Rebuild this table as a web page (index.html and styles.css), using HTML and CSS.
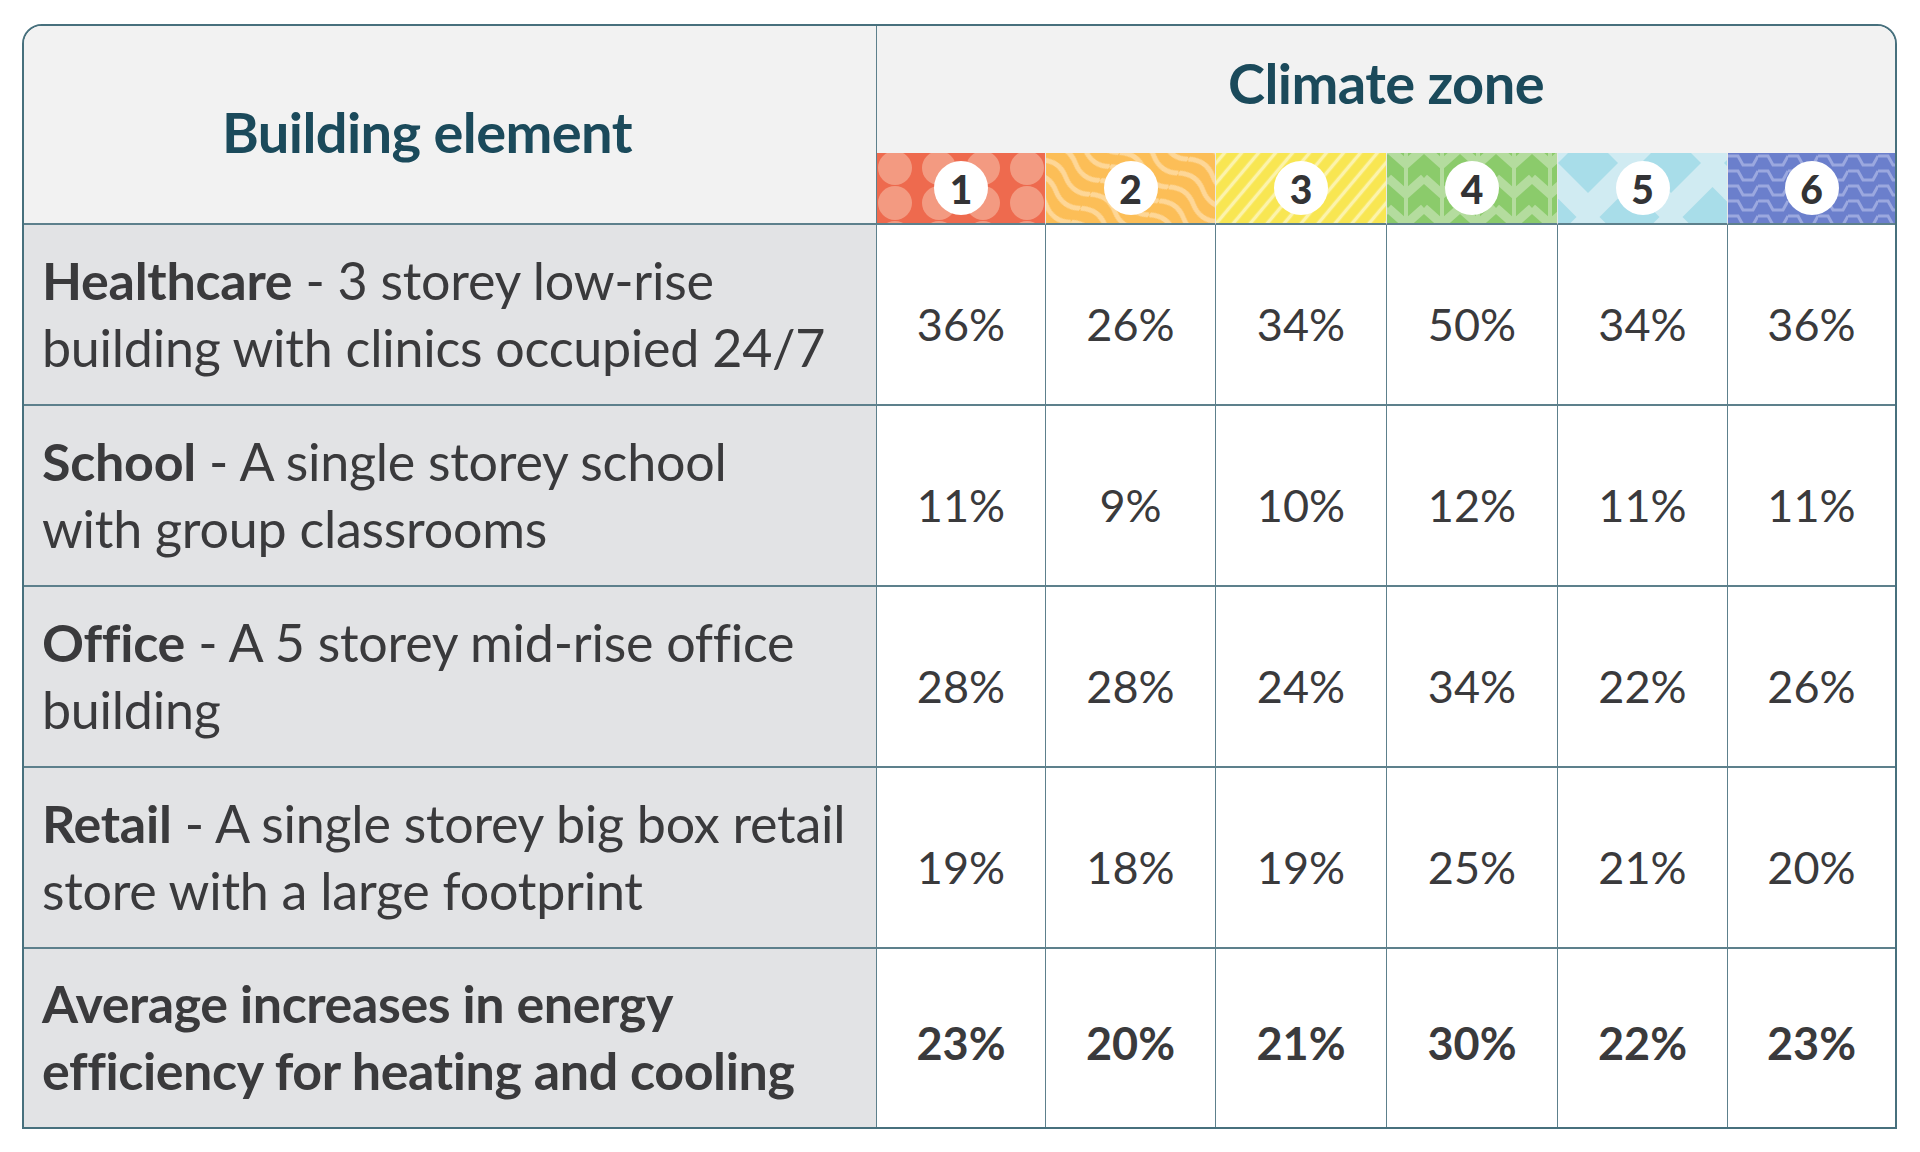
FILE: index.html
```html
<!DOCTYPE html>
<html lang="en">
<head>
<meta charset="utf-8">
<title>Climate zone energy efficiency</title>
<link rel="stylesheet" href="styles.css">
</head>
<body>
<div class="table">
  <div class="cell head-label"><span>Building element</span></div>
  <div class="cell head-zone">Climate zone</div>

  <div class="cell zone">
    <svg class="pat" aria-hidden="true"><defs><pattern id="p1" width="44" height="35" x="-4" y="-3" patternUnits="userSpaceOnUse"><rect width="44" height="35" fill="#ee6a4e"/><circle cx="22" cy="18" r="17" fill="#f39a81"/></pattern></defs><rect width="100%" height="100%" fill="url(#p1)"/></svg>
    <span class="badge">1</span>
  </div>
  <div class="cell zone">
    <svg class="pat" aria-hidden="true"><defs><pattern id="p2" width="60" height="17" patternUnits="userSpaceOnUse" patternTransform="rotate(35)"><rect width="60" height="17" fill="#fcbe57"/><path d="M0 8.5 Q15 -1.5 30 8.5 T60 8.5" fill="none" stroke="#fed797" stroke-width="5"/></pattern></defs><rect width="100%" height="100%" fill="url(#p2)"/></svg>
    <span class="badge">2</span>
  </div>
  <div class="cell zone">
    <svg class="pat" aria-hidden="true"><defs><pattern id="p3" width="20" height="13" patternUnits="userSpaceOnUse" patternTransform="rotate(-50)"><rect width="20" height="13" fill="#f8e652"/><line x1="0" y1="6.5" x2="20" y2="6.5" stroke="#fcf3ab" stroke-width="3.5"/></pattern></defs><rect width="100%" height="100%" fill="url(#p3)"/></svg>
    <span class="badge">3</span>
  </div>
  <div class="cell zone">
    <svg class="pat" aria-hidden="true"><defs><pattern id="p4" width="36" height="30" x="1" y="-6" patternUnits="userSpaceOnUse"><rect width="36" height="30" fill="#8bcb6b"/><line x1="18" y1="0" x2="18" y2="30" stroke="#b4dc9e" stroke-width="4"/><polyline points="0,1 18,17 36,1" fill="none" stroke="#b4dc9e" stroke-width="9"/><polyline points="0,31 18,47 36,31" fill="none" stroke="#b4dc9e" stroke-width="9"/><polyline points="0,-29 18,-13 36,-29" fill="none" stroke="#b4dc9e" stroke-width="9"/></pattern></defs><rect width="100%" height="100%" fill="url(#p4)"/></svg>
    <span class="badge">4</span>
  </div>
  <div class="cell zone">
    <svg class="pat" aria-hidden="true"><defs><pattern id="p5" width="83" height="108" patternUnits="userSpaceOnUse"><rect width="83" height="108" fill="#d0ebf2"/><g fill="#a8dde9"><polygon points="30,-20 60,10 30,40 0,10"/><polygon points="30,88 60,118 30,148 0,118"/><polygon points="71.5,34 101.5,64 71.5,94 41.5,64"/><polygon points="-11.5,34 18.5,64 -11.5,94 -41.5,64"/></g></pattern></defs><rect width="100%" height="100%" fill="url(#p5)"/></svg>
    <span class="badge">5</span>
  </div>
  <div class="cell zone last">
    <svg class="pat" aria-hidden="true"><defs><pattern id="p6" width="30" height="15" patternUnits="userSpaceOnUse"><rect width="30" height="15" fill="#6b7fcc"/><polyline points="0,3 10,3 15,12 25,12 30,3" fill="none" stroke="#9ba8df" stroke-width="3" stroke-linejoin="miter"/></pattern></defs><rect width="100%" height="100%" fill="url(#p6)"/></svg>
    <span class="badge">6</span>
  </div>

  <div class="cell label"><p><strong>Healthcare</strong> - 3 storey low-rise<br>building with clinics occupied 24/7</p></div>
  <div class="cell val">36%</div>
  <div class="cell val">26%</div>
  <div class="cell val">34%</div>
  <div class="cell val">50%</div>
  <div class="cell val">34%</div>
  <div class="cell val last">36%</div>

  <div class="cell label"><p><strong>School</strong> - A single storey school<br>with group classrooms</p></div>
  <div class="cell val">11%</div>
  <div class="cell val">9%</div>
  <div class="cell val">10%</div>
  <div class="cell val">12%</div>
  <div class="cell val">11%</div>
  <div class="cell val last">11%</div>

  <div class="cell label"><p><strong>Office</strong> - A 5 storey mid-rise office<br>building</p></div>
  <div class="cell val">28%</div>
  <div class="cell val">28%</div>
  <div class="cell val">24%</div>
  <div class="cell val">34%</div>
  <div class="cell val">22%</div>
  <div class="cell val last">26%</div>

  <div class="cell label"><p><strong>Retail</strong> - A single storey big box retail<br>store with a large footprint</p></div>
  <div class="cell val">19%</div>
  <div class="cell val">18%</div>
  <div class="cell val">19%</div>
  <div class="cell val">25%</div>
  <div class="cell val">21%</div>
  <div class="cell val last">20%</div>

  <div class="cell label total"><p><strong>Average increases in energy<br>efficiency for heating and cooling</strong></p></div>
  <div class="cell val total">23%</div>
  <div class="cell val total">20%</div>
  <div class="cell val total">21%</div>
  <div class="cell val total">30%</div>
  <div class="cell val total">22%</div>
  <div class="cell val total last">23%</div>
</div>
</body>
</html>
```
FILE: styles.css
```css
html, body {
  margin: 0;
  padding: 0;
  background: #ffffff;
}

body {
  font-family: Lato, "Noto Sans", sans-serif;
  color: #3a3a3c;
}

.table {
  box-sizing: border-box;
  width: 1875px;
  margin: 24px 0 0 22px;
  border: 2px solid #47707d;
  border-radius: 20px 20px 0 0;
  overflow: hidden;
  display: grid;
  grid-template-columns: 853px 169px 170px 171px 171px 170px 1fr;
  grid-template-rows: 127px 72px 181px 181px 181px 181px 178px;
}

.cell {
  box-sizing: border-box;
  min-width: 0;
}

.head-label {
  grid-row: 1 / span 2;
  background: #f2f2f2;
  border-right: 1px solid #5d808c;
  border-bottom: 2px solid #5d808c;
  display: flex;
  align-items: center;
  justify-content: center;
  padding-right: 46px;
  padding-top: 13px;
  font-weight: 700;
  font-size: 56px;
  letter-spacing: -0.6px;
  color: #1b4a5b;
}

.head-zone {
  grid-column: 2 / span 6;
  background: #f2f2f2;
  display: flex;
  align-items: center;
  justify-content: center;
  padding-bottom: 14px;
  font-weight: 700;
  font-size: 56px;
  letter-spacing: -0.6px;
  color: #1b4a5b;
}

.zone {
  display: grid;
  border-right: 1px solid #e9e9e9;
  border-bottom: 2px solid #5d808c;
  overflow: hidden;
}

.zone > * {
  grid-area: 1 / 1;
}

.pat {
  width: 100%;
  height: 100%;
  display: block;
}

.badge {
  place-self: center;
  width: 54px;
  height: 54px;
  border-radius: 50%;
  background: #ffffff;
  display: flex;
  align-items: center;
  justify-content: center;
  padding-top: 1px;
  box-sizing: border-box;
  font-weight: 900;
  font-size: 39px;
  color: #333335;
}

.label {
  background: #e2e3e5;
  border-right: 1px solid #5d808c;
  border-bottom: 2px solid #5d808c;
  display: flex;
  align-items: center;
  padding: 0 8px 2px 18px;
}

.label p {
  margin: 0;
  font-size: 52px;
  line-height: 67px;
  letter-spacing: -0.25px;
  white-space: nowrap;
}

.label strong {
  font-weight: 700;
}

.label.total p {
  letter-spacing: -0.4px;
}

.val {
  border-right: 1px solid #5d808c;
  border-bottom: 2px solid #5d808c;
  display: flex;
  align-items: center;
  justify-content: center;
  padding-top: 18px;
  font-size: 45px;
  background: #ffffff;
}

.val.total {
  font-weight: 700;
  padding-top: 10px;
}

.cell.last {
  border-right: none;
}

.cell.total {
  border-bottom: none;
}
```
